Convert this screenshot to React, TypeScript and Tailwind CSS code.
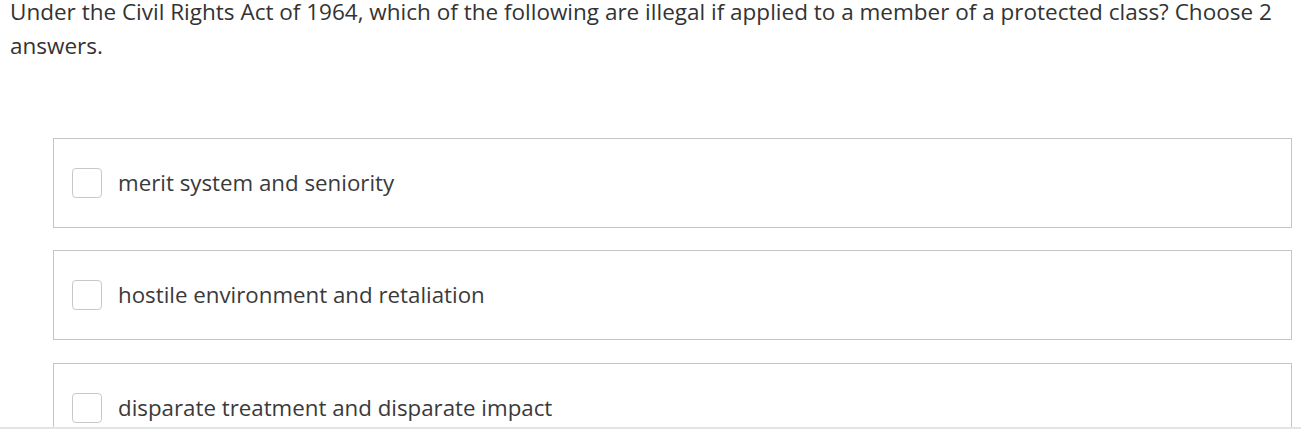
const OPTIONS = [
  'merit system and seniority',
  'hostile environment and retaliation',
  'disparate treatment and disparate impact',
  'bona fide occupational qualification',
]

export default function App() {
  return (
    <div
      className="h-[429px] overflow-hidden bg-white border-b-2 border-[#e4e4e4] text-[#333333]"
      style={{ fontFamily: '"Open Sans", "Liberation Sans", sans-serif' }}
    >
      <p className="px-[10px] -mt-[5px] text-[22.5px] leading-[33.6px]">
        Under the Civil Rights Act of 1964, which of the following are illegal if applied to a member of a protected class? Choose 2 answers.
      </p>

      <div className="ml-[53px] mr-[9px] mt-[75.8px] flex flex-col gap-[22.5px]">
        {OPTIONS.map(opt => (
          <label
            key={opt}
            className="flex h-[90px] shrink-0 items-center gap-[16px] border border-[#c4c4c4] bg-white pl-[18px]"
          >
            <span className="h-[30px] w-[30px] shrink-0 rounded-[4px] border border-[#c8c8c8] bg-white" />
            <span className="text-[22.3px] leading-[28px] text-[#3a3a3a]">{opt}</span>
          </label>
        ))}
      </div>
    </div>
  )
}
